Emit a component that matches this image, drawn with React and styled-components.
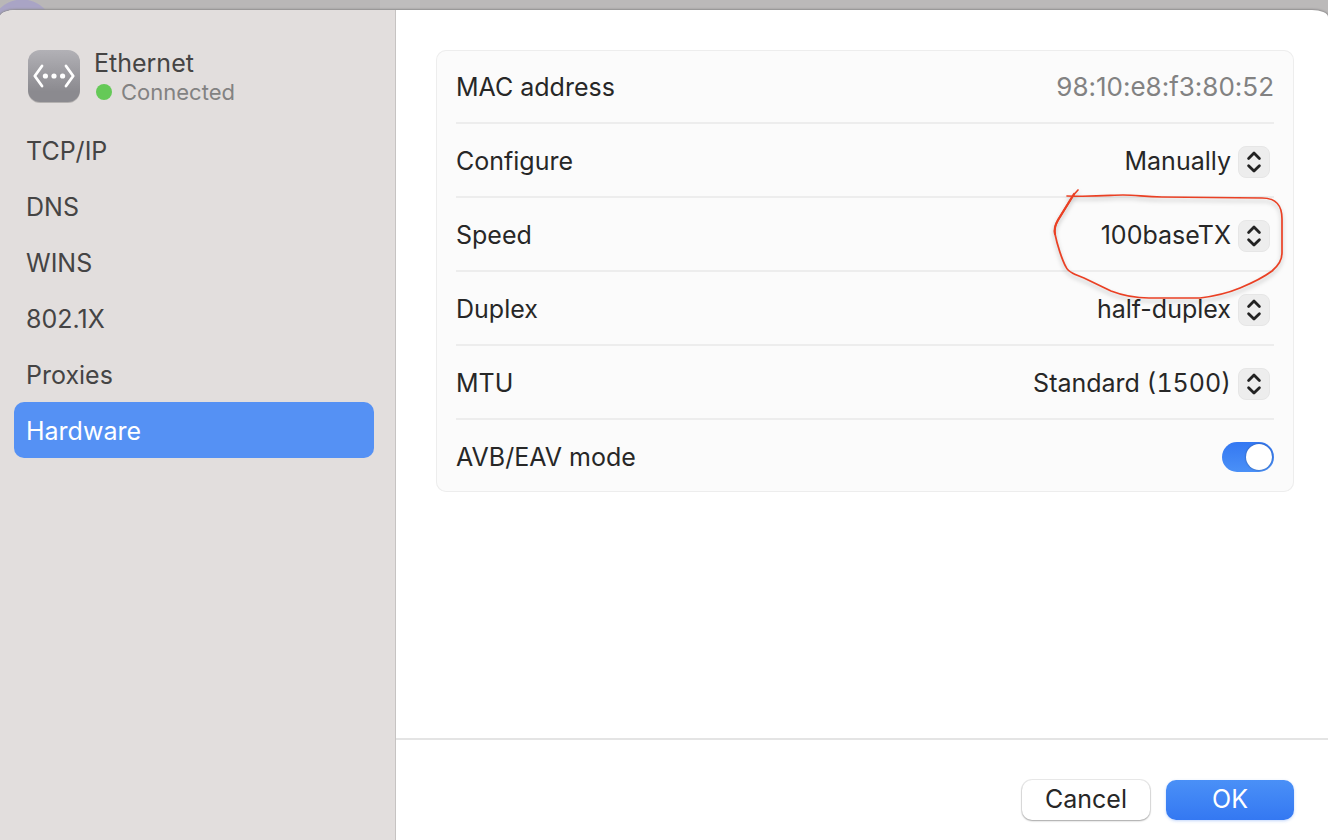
import { useState } from "react";
import styled, { createGlobalStyle } from "styled-components";

const GlobalStyle = createGlobalStyle`
  * {
    box-sizing: border-box;
  }
  :root {
    --text: #272727;
    --text-side: #454444;
    --muted: #828282;
    --line: #ededed;
    --blue: #5591f4;
  }
  body {
    margin: 0;
    color: var(--text);
    font: 25px/32px Inter, "Liberation Sans", sans-serif;
  }
`;

const Desktop = styled.div`
  display: flex;
  min-height: 100vh;
  padding-top: 10px;
  background:
    radial-gradient(circle at 22px 31px, #a9a4c5 31px, transparent 32px),
    linear-gradient(90deg, #b9b7b7 380px, #bfbdbd 380px, #bfbdbd 420px, #bbb9b9 420px);
`;

const Sheet = styled.div`
  display: flex;
  flex: 1;
  overflow: hidden;
  background: #fff;
  border-radius: 16px 16px 0 0 / 7px 7px 0 0;
  box-shadow: 0 0 2px 1px #8f8d8e;
`;

const Sidebar = styled.aside`
  flex: none;
  width: 396px;
  padding: 37px 21px 20px 14px;
  color: var(--text-side);
  background: #e2dedd;
  border-right: 1px solid #c6c3c2;
`;

const Service = styled.header`
  display: flex;
  gap: 14px;
  padding: 0 0 17px 14px;
  svg {
    flex: none;
    margin-top: 3px;
  }
  h1 {
    margin: 0;
    font: inherit;
  }
`;

const Status = styled.p`
  display: flex;
  align-items: center;
  gap: 9px;
  margin: 0;
  padding-left: 2px;
  color: var(--muted);
  font-size: 22px;
  line-height: 26px;
  &::before {
    content: "";
    width: 16px;
    height: 16px;
    border-radius: 50%;
    background: #65c957;
  }
`;

const NavItem = styled.a`
  display: block;
  padding: 13px 12px 11px;
  border-radius: 10px;
  color: ${(props) => (props.$active ? "#fff" : "inherit")};
  background: ${(props) => (props.$active ? "var(--blue)" : "none")};
  text-decoration: none;
`;

const Main = styled.main`
  display: flex;
  flex: 1;
  flex-direction: column;
  min-width: 0;
`;

const Content = styled.div`
  flex: 1;
  padding: 40px 34px 40px 40px;
`;

const Card = styled.div`
  padding: 0 20px;
  background: #fbfbfb;
  border-radius: 10px;
  box-shadow: inset 0 0 0 1px var(--line);
`;

const Row = styled.div`
  position: relative;
  display: flex;
  align-items: center;
  justify-content: space-between;
  height: 74px;
  padding-top: 2px;
  border-bottom: 2px solid var(--line);
  &:last-child {
    height: 72px;
    border-bottom: none;
  }
`;

const Value = styled.output`
  color: var(--muted);
  font-size: 26px;
  font-variant-ligatures: no-contextual;
`;

const Picker = styled.div`
  display: grid;
  align-items: end;
  justify-items: end;
  margin-right: 4px;
  & > * {
    grid-area: 1 / 1;
  }
  select {
    appearance: none;
    height: 34px;
    padding: 0 39px 0 0;
    border: none;
    color: inherit;
    background: none;
    font: inherit;
    font-variant-numeric: ${(props) => (props.$tabular ? "tabular-nums" : "normal")};
    text-align-last: right;
  }
  svg {
    pointer-events: none;
  }
`;

const Toggle = styled.input`
  appearance: none;
  display: flex;
  width: 52px;
  height: 30px;
  margin: 0;
  padding: 2px;
  border-radius: 15px;
  background: #d9d9d9;
  &::before {
    content: "";
    width: 26px;
    height: 26px;
    border-radius: 50%;
    background: #fff;
    box-shadow: 0 0 2px rgba(0, 0, 0, 0.4);
  }
  &:checked {
    justify-content: flex-end;
    background: linear-gradient(#3478f2, #4a90f7);
  }
`;

const Marker = styled.svg`
  position: absolute;
  top: -12px;
  right: -14px;
  z-index: 1;
  overflow: visible;
  pointer-events: none;
  filter: drop-shadow(0 3px 2px rgba(0, 0, 0, 0.25));
`;

const Footer = styled.footer`
  display: flex;
  justify-content: flex-end;
  gap: 16px;
  padding: 40px 34px 20px;
  border-top: 2px solid #e4e4e4;
`;

const Button = styled.button`
  width: 128px;
  height: 40px;
  padding: 0 0 2px;
  border: none;
  border-radius: 10px;
  font: inherit;
  color: ${(props) => (props.$primary ? "#fff" : "inherit")};
  background: ${(props) =>
    props.$primary ? "linear-gradient(#4a90f7, #3478f2)" : "#fff"};
  box-shadow: ${(props) =>
    props.$primary
      ? "0 1px 3px rgba(52, 120, 242, 0.3)"
      : "0 0 0 1px rgba(0, 0, 0, 0.08), 0 1px 2px rgba(0, 0, 0, 0.3)"};
`;

const sections = ["TCP/IP", "DNS", "WINS", "802.1X", "Proxies", "Hardware"];

const settings = [
  { id: "configure", label: "Configure", options: ["Manually"] },
  { id: "speed", label: "Speed", options: ["100baseTX"], marked: true },
  { id: "duplex", label: "Duplex", options: ["half-duplex"] },
  { id: "mtu", label: "MTU", options: ["Standard (1500)"], tabular: true },
];

function EthernetIcon() {
  return (
    <svg width="52" height="52" viewBox="0 0 52 52" overflow="visible" aria-hidden="true">
      <defs>
        <linearGradient id="tile" x1="0" y1="0" x2="0" y2="1">
          <stop offset="0" stopColor="#b2b1b6" />
          <stop offset="0.8" stopColor="#8b8a8f" />
          <stop offset="1" stopColor="#8b8a8f" />
        </linearGradient>
      </defs>
      <rect y="1" width="52" height="52" rx="12" fill="#000" opacity="0.2" />
      <rect width="52" height="52" rx="12" fill="url(#tile)" />
      <g fill="none" stroke="#fff" strokeWidth="2.8" strokeLinecap="round" strokeLinejoin="round">
        <path d="M14 16 6.8 26 14 36M38 16l7.2 10L38 36" />
      </g>
      <g fill="#fff">
        <circle cx="17.4" cy="26" r="2.6" />
        <circle cx="26" cy="26" r="2.6" />
        <circle cx="34.6" cy="26" r="2.6" />
      </g>
    </svg>
  );
}

function ChevronsIcon() {
  return (
    <svg width="32" height="32" viewBox="0 0 32 32" aria-hidden="true">
      <rect x="0.5" y="0.5" width="31" height="31" rx="7.5" fill="#ededed" stroke="#e6e6e6" />
      <path
        d="M10.6 12.4 16 7l5.4 5.4M10.6 19.7 16 25.1l5.4-5.4"
        fill="none"
        stroke="#222"
        strokeWidth="2.8"
        strokeLinecap="round"
        strokeLinejoin="round"
      />
    </svg>
  );
}

function HandCircle() {
  return (
    <Marker width="234" height="116" viewBox="0 0 234 116" fill="none" stroke="#ea4024" aria-hidden="true">
      <path
        d="M24 4C20 8 19 10 17 13L4 34C1 39 0 43 1 48C3 58 8 74 12 81C14 86 22 89 30 92L57 105C70 110 82 112 95 112H146C162 110 174 107 186 102C198 97 210 91 218 85C224 80 228 74 228 67V33C228 19 222 12 208 12L108 11C90 11 84 9 69 9C57 9 45 11 13 10"
        strokeWidth="1.7"
        strokeLinecap="round"
        strokeLinejoin="round"
      />
      <path d="M20 8 4 34C1 39 0 43 1 48" strokeWidth="2.2" strokeLinecap="round" />
    </Marker>
  );
}

function SettingRow({ id, label, options, marked, tabular }) {
  return (
    <Row>
      <label htmlFor={id}>{label}</label>
      <Picker $tabular={tabular}>
        <select id={id}>
          {options.map((item) => (
            <option key={item}>{item}</option>
          ))}
        </select>
        <ChevronsIcon />
      </Picker>
      {marked ? <HandCircle /> : null}
    </Row>
  );
}

function App() {
  const [active, setActive] = useState("Hardware");
  const [avb, setAvb] = useState(true);

  return (
    <Desktop>
      <GlobalStyle />
      <Sheet>
        <Sidebar>
          <Service>
            <EthernetIcon />
            <div>
              <h1>Ethernet</h1>
              <Status>Connected</Status>
            </div>
          </Service>
          <nav>
            {sections.map((item) => (
              <NavItem
                key={item}
                href="#"
                $active={item === active}
                onClick={() => setActive(item)}
              >
                {item}
              </NavItem>
            ))}
          </nav>
        </Sidebar>
        <Main>
          <Content>
            <Card>
              <Row>
                <label htmlFor="mac">MAC address</label>
                <Value id="mac">98:10:e8:f3:80:52</Value>
              </Row>
              {settings.map((item) => (
                <SettingRow key={item.id} {...item} />
              ))}
              <Row>
                <label htmlFor="avb">AVB/EAV mode</label>
                <Toggle
                  id="avb"
                  type="checkbox"
                  role="switch"
                  checked={avb}
                  onChange={() => setAvb(!avb)}
                />
              </Row>
            </Card>
          </Content>
          <Footer>
            <Button type="button">Cancel</Button>
            <Button type="button" $primary>
              OK
            </Button>
          </Footer>
        </Main>
      </Sheet>
    </Desktop>
  );
}

export default App;
